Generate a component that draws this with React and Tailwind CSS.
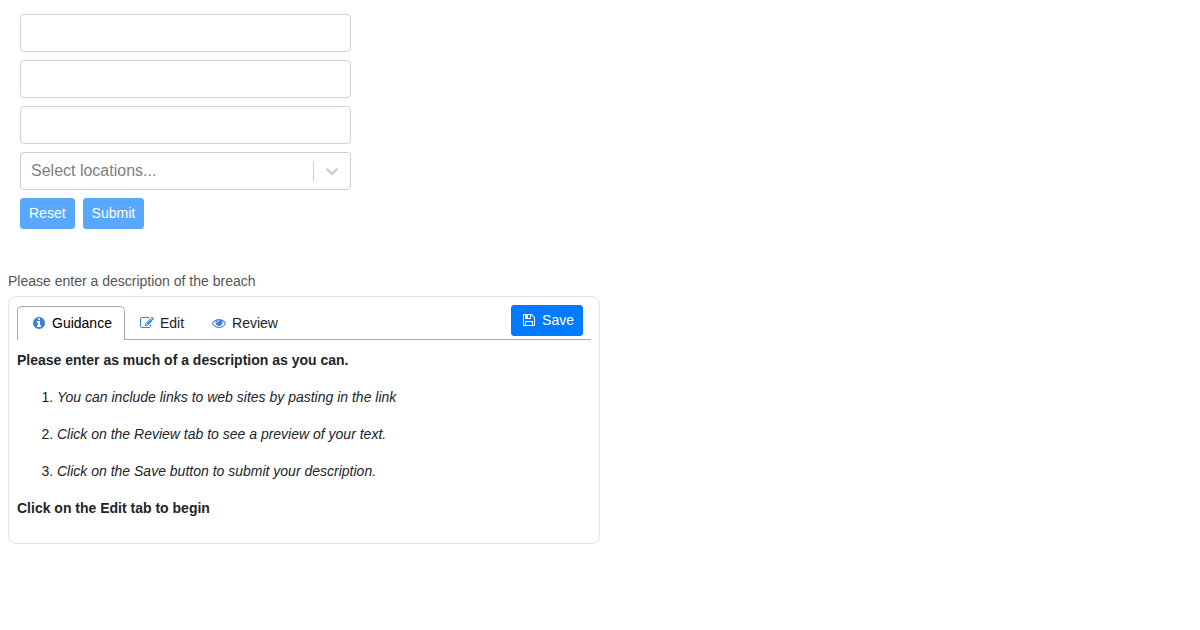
import { useState } from "react";

const ICONS = {
  info: "M1152 1376v-160q0-14-9-23t-23-9h-96v-512q0-14-9-23t-23-9h-320q-14 0-23 9t-9 23v160q0 14 9 23t23 9h96v320h-96q-14 0-23 9t-9 23v160q0 14 9 23t23 9h448q14 0 23-9t9-23zm-128-896v-160q0-14-9-23t-23-9h-192q-14 0-23 9t-9 23v160q0 14 9 23t23 9h192q14 0 23-9t9-23zm640 416q0 209-103 385.5t-279.5 279.5-385.5 103-385.5-103-279.5-279.5-103-385.5 103-385.5 279.5-279.5 385.5-103 385.5 103 279.5 279.5 103 385.5z",
  edit: "M888 1184l116-116-152-152-116 116v56h96v96h56zm440-720q-16-16-33 1l-350 350q-17 17-1 33t33-1l350-350q17-17 1-33zm80 594v190q0 119-84.5 203.5t-203.5 84.5h-832q-119 0-203.5-84.5t-84.5-203.5v-832q0-119 84.5-203.5t203.5-84.5h832q63 0 117 25 15 7 18 23 3 17-9 29l-49 49q-14 14-32 8-23-6-45-6h-832q-66 0-113 47t-47 113v832q0 66 47 113t113 47h832q66 0 113-47t47-113v-126q0-13 9-22l64-64q15-15 35-7t20 29zm-96-738l288 288-672 672h-288v-288zm444 132l-92 92-288-288 92-92q28-28 68-28t68 28l152 152q28 28 28 68t-28 68z",
  eye: "M1664 960q-152-236-381-353 61 104 61 225 0 185-131.5 316.5t-316.5 131.5-316.5-131.5-131.5-316.5q0-121 61-225-229 117-381 353 133 205 333.5 326.5t434.5 121.5 434.5-121.5 333.5-326.5zm-720-384q0-20-14-34t-34-14q-125 0-214.5 89.5t-89.5 214.5q0 20 14 34t34 14 34-14 14-34q0-86 61-147t147-61q20 0 34-14t14-34zm848 384q0 34-20 69-140 230-376.5 368.5t-499.5 138.5-499.5-139-376.5-368q-20-35-20-69t20-69q140-229 376.5-368t499.5-139 499.5 139 376.5 368q20 35 20 69z",
  save: "M512 1536h768v-384h-768v384zm896 0h128v-896q0-14-10-38.5t-20-34.5l-281-281q-10-10-34-20t-39-10v416q0 40-28 68t-68 28h-576q-40 0-68-28t-28-68v-416h-128v1280h128v-416q0-40 28-68t68-28h832q40 0 68 28t28 68v416zm-384-928v-320q0-13-9.5-22.5t-22.5-9.5h-192q-13 0-22.5 9.5t-9.5 22.5v320q0 13 9.5 22.5t22.5 9.5h192q13 0 22.5-9.5t9.5-22.5zm640 32v928q0 40-28 68t-68 28h-1344q-40 0-68-28t-28-68v-1344q0-40 28-68t68-28h928q40 0 88 20t76 48l280 280q28 28 48 76t20 88z",
};

function Icon({ name }) {
  return (
    <span className="flex w-[18px] shrink-0 justify-center" aria-hidden="true">
      <svg className="size-[14px]" viewBox="0 128 1792 1792" overflow="visible" fill="currentColor">
        <path d={ICONS[name]} />
      </svg>
    </span>
  );
}

const TABS = [
  { id: "guidance", label: "Guidance", icon: "info" },
  { id: "edit", label: "Edit", icon: "edit" },
  { id: "review", label: "Review", icon: "eye" },
];

const FIELDS = ["Field 1", "Field 2", "Field 3"];

function SearchForm() {
  return (
    <form
      className="flex w-full max-w-[355px] flex-col gap-2 px-3 pt-3.5"
      onSubmit={(e) => e.preventDefault()}
    >
      {FIELDS.map((label) => (
        <input
          key={label}
          type="text"
          aria-label={label}
          className="h-[38px] w-full rounded border border-[#ced4da] bg-white px-3 text-base text-[#495057] outline-none focus:border-[#80bdff]"
        />
      ))}
      <div className="flex h-[38px] items-center rounded border border-[#cccccc] bg-white">
        <select
          aria-label="Locations"
          defaultValue=""
          className="h-full min-w-0 flex-1 appearance-none bg-transparent pl-2.5 text-base text-[#808080] outline-none"
        >
          <option value="">Select locations...</option>
        </select>
        <span className="h-5 w-px bg-[#cccccc]" />
        <svg className="mx-2 size-5 text-[#cccccc]" viewBox="0 0 20 20" fill="currentColor" aria-hidden="true">
          <path d="M4.516 7.548c0.436-0.446 1.043-0.481 1.576 0l3.908 3.747 3.908-3.747c0.533-0.481 1.141-0.446 1.574 0 0.436 0.445 0.408 1.197 0 1.615-0.406 0.418-4.695 4.502-4.695 4.502-0.217 0.223-0.502 0.335-0.787 0.335s-0.57-0.112-0.789-0.335c0 0-4.287-4.084-4.695-4.502s-0.436-1.17 0-1.615z" />
        </svg>
      </div>
      <div className="flex gap-2">
        <button type="reset" disabled className="rounded-[3px] border border-[#007bff] bg-[#007bff] px-2 py-1 leading-[21px] text-white opacity-65">
          Reset
        </button>
        <button type="submit" disabled className="rounded-[3px] border border-[#007bff] bg-[#007bff] px-2 py-1 leading-[21px] text-white opacity-65">
          Submit
        </button>
      </div>
    </form>
  );
}

function DescriptionEditor() {
  const [active, setActive] = useState("guidance");
  return (
    <section className="rounded-lg border border-[#e4e4e4] p-2">
      <div className="flex items-start justify-between border-b border-[#aaaaaa] pr-2">
        <div role="tablist" className="-mb-px mt-px flex">
          {TABS.map((tab) => (
            <button
              key={tab.id}
              type="button"
              role="tab"
              aria-selected={active === tab.id}
              onClick={() => setActive(tab.id)}
              className={
                active === tab.id
                  ? "flex items-center gap-1 rounded-t-[5px] border border-b-0 border-[#aaaaaa] bg-white px-3 py-1.5 text-black"
                  : "flex items-center gap-1 border border-b-0 border-transparent px-3 py-1.5 text-[#212529]"
              }
            >
              <span className="text-[#3b82dc]">
                <Icon name={tab.icon} />
              </span>
              {tab.label}
            </button>
          ))}
        </div>
        <button type="button" className="flex items-center gap-1 rounded-[3px] border border-[#007bff] bg-[#007bff] px-2 py-1 text-white">
          <Icon name="save" />
          Save
        </button>
      </div>
      <div role="tabpanel" className="flex flex-col gap-4 pb-4 pt-2.5">
        <p className="font-bold">Please enter as much of a description as you can.</p>
        <ol className="flex list-decimal flex-col gap-4 pl-10">
          <li><em>You can include links to web sites by pasting in the link</em></li>
          <li><em>Click on the Review tab to see a preview of your text.</em></li>
          <li><em>Click on the Save button to submit your description.</em></li>
        </ol>
        <p className="font-bold">Click on the Edit tab to begin</p>
      </div>
    </section>
  );
}

export default function App() {
  return (
    <main className="px-2 font-['Helvetica_Neue',Helvetica,'Liberation_Sans',Arial,sans-serif] text-[14px] leading-[21px] text-[#212529]">
      <SearchForm />
      <div className="mt-[42px] flex w-1/2 flex-col gap-1">
        <p className="text-[#555555]">Please enter a description of the breach</p>
        <DescriptionEditor />
      </div>
    </main>
  );
}
